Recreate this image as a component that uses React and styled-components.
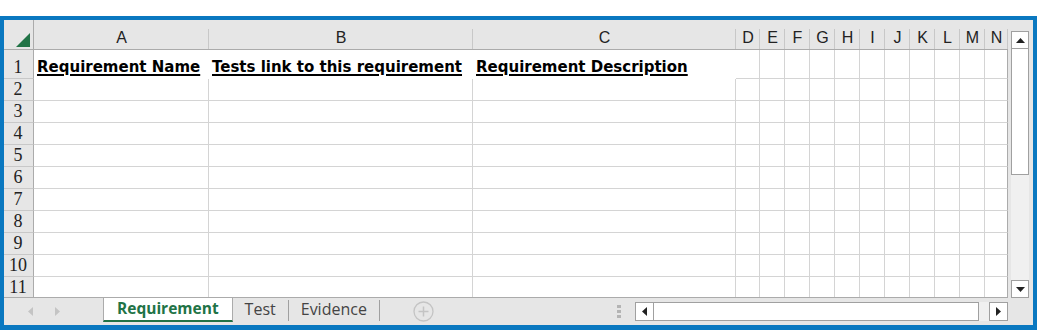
import styled, { createGlobalStyle } from "styled-components";

const BLUE = "#0a78c0";
const GRID = "#d4d4d4";
const EDGE = "#ababab";
const COLUMNS = "30px 175px 264px 263px 24px repeat(9, 25px) 23px";
const LETTERS = ["A", "B", "C", "D", "E", "F", "G", "H", "I", "J", "K", "L", "M", "N"];

const HEADINGS = [
  "Requirement Name",
  "Tests link to this requirement",
  "Requirement Description",
];

const ROWS = [1, 2, 3, 4, 5, 6, 7, 8, 9, 10, 11];

const GlobalStyle = createGlobalStyle`
  html, body {
    margin: 0;
    padding: 0;
    background: #fff;
  }
  body {
    font-family: "Liberation Sans", Arial, sans-serif;
  }
  * {
    box-sizing: border-box;
  }
`;

const Page = styled.div`
  width: 1037px;
  padding-top: 16px;
`;

const Window = styled.div`
  height: 314px;
  border: solid ${BLUE};
  border-width: 4px 4px 5px 4px;
  background: #e6e6e6;
  display: flex;
  flex-direction: column;
`;

const Main = styled.div`
  display: flex;
  height: 278px;
`;

const Sheet = styled.div`
  width: 1004px;
  display: flex;
  flex-direction: column;
  border-bottom: 1px solid ${EDGE};
`;

const HeaderRow = styled.div`
  display: grid;
  grid-template-columns: ${COLUMNS};
  height: 30px;
  border-bottom: 1px solid ${EDGE};
`;

const Corner = styled.div`
  display: flex;
  align-items: flex-end;
  justify-content: flex-end;
  padding: 0 3px 2px 0;
  border-right: 1px solid ${EDGE};
`;

const ColHead = styled.div`
  display: flex;
  align-items: flex-end;
  justify-content: center;
  padding-bottom: 3px;
  font-family: "Liberation Sans", Arial, sans-serif;
  font-size: 16px;
  line-height: 1;
  color: #222;
  background: linear-gradient(#c8c8c8, #c8c8c8) right 9px / 1px calc(100% - 9px) no-repeat;
`;

const Rows = styled.div`
  flex: 1;
  overflow: hidden;
  background: #fff;
`;

const Row = styled.div`
  display: grid;
  grid-template-columns: ${COLUMNS};
  height: ${(p) => p.$h}px;
`;

const RowHead = styled.div`
  display: flex;
  align-items: flex-end;
  justify-content: center;
  padding: 0 1px 2px 0;
  background: #e6e6e6;
  border-right: 1px solid ${EDGE};
  border-bottom: 1px solid #c8c8c8;
  font-family: "Liberation Serif", "Times New Roman", serif;
  font-size: 18px;
  line-height: 1;
  color: #222;
`;

const Cell = styled.div`
  display: flex;
  align-items: flex-end;
  padding: 0 0 3px 3px;
  background: #fff;
  border-right: 1px solid ${(p) => (p.$filled ? "#fff" : GRID)};
  border-bottom: 1px solid ${(p) => (p.$filled ? "#fff" : GRID)};
  white-space: nowrap;
  font-family: "DejaVu Sans", Verdana, sans-serif;
  font-weight: bold;
  font-size: 15px;
  line-height: 1;
  color: #000;
  text-decoration: underline;
  text-decoration-thickness: 2px;
  text-underline-offset: 2px;

  &:last-child {
    border-right-color: ${EDGE};
  }
`;

const VScroll = styled.div`
  width: 25px;
  padding: 11px 4px 0 3px;
  display: flex;
  flex-direction: column;
`;

const ScrollBtn = styled.div`
  flex: none;
  width: ${(p) => p.$w || 18}px;
  height: ${(p) => p.$h || 18}px;
  background: #fff;
  border: 1px solid #a0a0a0;
  display: flex;
  align-items: center;
  justify-content: center;
`;

const VThumb = styled.div`
  flex: none;
  height: 127px;
  margin-top: -1px;
  background: #fff;
  border: 1px solid #a0a0a0;
`;

const Track = styled.div`
  flex: 1;
  background: #f0f0f0;
`;

const TabBar = styled.div`
  flex: 1;
  display: flex;
  align-items: flex-start;
`;

const Nav = styled.div`
  width: 99px;
  height: 27px;
  display: flex;
  align-items: center;
  gap: 22px;
  padding-left: 24px;
`;

const Tab = styled.div`
  height: 24px;
  display: flex;
  align-items: center;
  padding: 0 13px 3px ${(p) => (p.$active ? 13 : 12)}px;
  font-family: "Open Sans", "Noto Sans", sans-serif;
  font-size: ${(p) => (p.$active ? 15.5 : 16)}px;
  white-space: nowrap;
  color: ${(p) => (p.$active ? "#217346" : "#444")};
  font-weight: ${(p) => (p.$active ? 700 : 400)};
  background: ${(p) =>
    p.$active
      ? "#fff"
      : "linear-gradient(#a0a0a0, #a0a0a0) right 2px / 1px 21px no-repeat"};
  border-left: ${(p) => (p.$active ? `1px solid ${EDGE}` : "none")};
  border-right: ${(p) => (p.$active ? `1px solid ${EDGE}` : "none")};
  border-bottom: ${(p) => (p.$active ? "2px solid #217346" : "none")};
`;

const AddButton = styled.div`
  margin: 3px 0 0 33px;
  width: 21px;
  height: 21px;
  display: flex;
`;

const Spacer = styled.div`
  flex: 1;
`;

const Grip = styled.div`
  margin: 7px 14px 0 0;
  display: flex;
  flex-direction: column;
  gap: 2px;

  span {
    width: 4px;
    height: 3px;
    background: #b4b4b4;
  }
`;

const HScroll = styled.div`
  margin-top: 4px;
  width: 373px;
  height: 19px;
  display: flex;
`;

const HThumb = styled.div`
  width: 326px;
  margin-left: -1px;
  background: #fff;
  border: 1px solid #a0a0a0;
`;

const HTrack = styled.div`
  flex: 1;
  background: #f0f0f0;
`;

const CornerFill = styled.div`
  width: 25px;
`;

const Arrow = ({ dir, color = "#222" }) => {
  const shapes = {
    up: { w: 9, h: 5, p: "0,5 4.5,0 9,5" },
    down: { w: 9, h: 5, p: "0,0 9,0 4.5,5" },
    left: { w: 5, h: 9, p: "5,0 5,9 0,4.5" },
    right: { w: 5, h: 9, p: "0,0 5,4.5 0,9" },
  };
  const s = shapes[dir];
  return (
    <svg width={s.w} height={s.h} viewBox={`0 0 ${s.w} ${s.h}`}>
      <polygon points={s.p} fill={color} />
    </svg>
  );
};

const SelectAll = () => (
  <svg width="14" height="14" viewBox="0 0 14 14">
    <polygon points="14,0 14,14 0,14" fill="#217346" />
  </svg>
);

const PlusCircle = () => (
  <svg width="21" height="21" viewBox="0 0 21 21">
    <circle cx="10.5" cy="10.5" r="9.5" fill="none" stroke="#c4c4c4" strokeWidth="1.3" />
    <path d="M10.5 5.5v10M5.5 10.5h10" stroke="#c4c4c4" strokeWidth="1.5" />
  </svg>
);

export default function App() {
  return (
    <Page>
      <GlobalStyle />
      <Window>
        <Main>
          <Sheet>
            <HeaderRow>
              <Corner>
                <SelectAll />
              </Corner>
              {LETTERS.map((l) => (
                <ColHead key={l}>{l}</ColHead>
              ))}
            </HeaderRow>
            <Rows>
              {ROWS.map((r) => (
                <Row key={r} $h={r === 1 ? 29 : 22}>
                  <RowHead>{r}</RowHead>
                  {LETTERS.map((l, i) => (
                    <Cell key={l} $filled={r === 1 && i < 3}>
                      {r === 1 && i < 3 ? HEADINGS[i] : null}
                    </Cell>
                  ))}
                </Row>
              ))}
            </Rows>
          </Sheet>
          <VScroll>
            <ScrollBtn>
              <Arrow dir="up" />
            </ScrollBtn>
            <VThumb />
            <Track />
            <ScrollBtn>
              <Arrow dir="down" />
            </ScrollBtn>
          </VScroll>
        </Main>
        <TabBar>
          <Nav>
            <Arrow dir="left" color="#c4c4c4" />
            <Arrow dir="right" color="#c4c4c4" />
          </Nav>
          <Tab $active>Requirement</Tab>
          <Tab>Test</Tab>
          <Tab>Evidence</Tab>
          <AddButton>
            <PlusCircle />
          </AddButton>
          <Spacer />
          <Grip>
            <span />
            <span />
            <span />
          </Grip>
          <HScroll>
            <ScrollBtn $w={19} $h={19}>
              <Arrow dir="left" />
            </ScrollBtn>
            <HThumb />
            <HTrack />
            <ScrollBtn $w={19} $h={19}>
              <Arrow dir="right" />
            </ScrollBtn>
          </HScroll>
          <CornerFill />
        </TabBar>
      </Window>
    </Page>
  );
}
